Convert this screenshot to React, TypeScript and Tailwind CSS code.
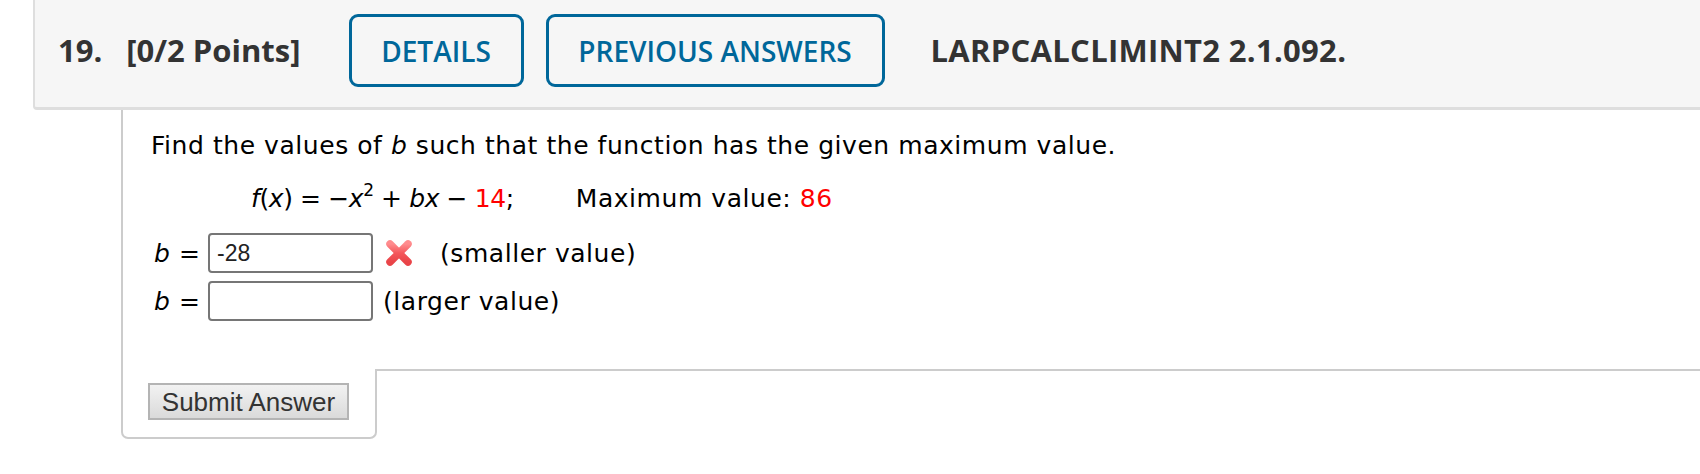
import React from 'react'

function WrongMark() {
  return (
    <svg width="28" height="28" viewBox="0 0 28 28" className="shrink-0">
      <defs>
        <linearGradient id="xg" x1="0" y1="0" x2="0" y2="1">
          <stop offset="0" stopColor="#ff8c8e" />
          <stop offset="0.5" stopColor="#f4575b" />
          <stop offset="1" stopColor="#e94448" />
        </linearGradient>
      </defs>
      <g stroke="url(#xg)" strokeWidth="7.5" strokeLinecap="round">
        <line x1="5" y1="5" x2="23" y2="23" />
        <line x1="23" y1="5" x2="5" y2="23" />
      </g>
    </svg>
  )
}

export default function App() {
  return (
    <div className="w-[1700px] h-[474px] overflow-hidden bg-white font-['DejaVu_Sans',sans-serif] text-black">
      {/* question header */}
      <div className="ml-[33px] h-[110px] pb-[6px] bg-[#f6f6f6] border-l-2 border-b-[3px] border-[#dedede] rounded-bl-[4px] pl-[23px] font-['Open_Sans',sans-serif] text-[#333]">
        <div className="h-[101px] flex items-center">
          <span className="text-[31px] font-bold">19.</span>
          <span className="ml-[24px] text-[31px] font-bold">[0/2 Points]</span>
          <button className="ml-[48px] w-[175px] h-[73px] rounded-[9px] border-[3px] border-[#00679a] text-[#00679a] text-[28px] font-semibold">
            DETAILS
          </button>
          <button className="ml-[22px] w-[339px] h-[73px] rounded-[9px] border-[3px] border-[#00679a] text-[#00679a] text-[28px] font-semibold">
            PREVIOUS ANSWERS
          </button>
          <span className="ml-[46px] text-[31px] font-bold tracking-[0.3px]">LARPCALCLIMINT2 2.1.092.</span>
        </div>
      </div>

      {/* question body */}
      <div className="ml-[121px]">
        <div className="h-[259px] border-l-2 border-[#cccccc] pl-[28px] pt-[21px] text-[25px] leading-[29px] tracking-[0.55px]">
          <p>
            Find the values of <i>b</i> such that the function has the given maximum value.
          </p>
          <p className="mt-[24px] ml-[100px] whitespace-pre">
            <span className="tracking-[-0.4px]">
              <i>f</i>(<i>x</i>) = −<i>x</i>
              <sup className="text-[17px] -top-[11px]">2</sup> + <i>bx</i> − <span className="text-[#ff0000]">14</span>;
            </span>
            <span className="ml-[62px]">Maximum value: </span>
            <span className="text-[#ff0000]">86</span>
          </p>

          <div className="mt-[20px] flex flex-col gap-[8px]">
            <div className="flex items-center h-[40px]">
              <span className="ml-[3px] w-[54px] whitespace-pre"><i>b</i> = </span>
              <input
                readOnly
                value="-28"
                className="w-[165px] h-[40px] rounded-[4px] border-2 border-[#767676] pl-[7px] font-['Liberation_Sans',sans-serif] text-[23px] tracking-normal text-[#222] outline-none"
              />
              <span className="ml-[12px]">
                <WrongMark />
              </span>
              <span className="ml-[27px]">(smaller value)</span>
            </div>
            <div className="flex items-center h-[40px]">
              <span className="ml-[3px] w-[54px] whitespace-pre"><i>b</i> = </span>
              <input
                readOnly
                value=""
                className="w-[165px] h-[40px] rounded-[4px] border-2 border-[#767676] pl-[7px] font-['Liberation_Sans',sans-serif] text-[23px] tracking-normal text-[#222] outline-none"
              />
              <span className="ml-[10px]">(larger value)</span>
            </div>
          </div>
        </div>

        <div className="flex">
          <div className="w-[256px] h-[70px] border-l-2 border-r-2 border-b-2 border-[#cccccc] rounded-b-[7px] pl-[25px] pt-[14px]">
            <button className="w-[201px] h-[37px] border-2 border-[#b4b4b4] bg-gradient-to-b from-[#f2f2f2] to-[#dadada] font-['Liberation_Sans',sans-serif] text-[26px] leading-none text-[#333]">
              Submit Answer
            </button>
          </div>
          <div className="flex-1 border-t-2 border-[#cccccc]" />
        </div>
      </div>
    </div>
  )
}
